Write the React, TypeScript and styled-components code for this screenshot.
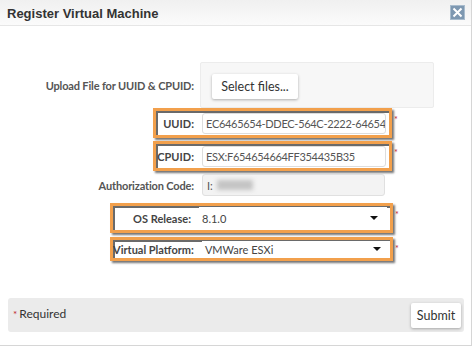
import React from "react";
import styled, { createGlobalStyle } from "styled-components";

const Global = createGlobalStyle`
  html, body { margin: 0; padding: 0; background: #ffffff; }
  body { font-family: Lato, "Open Sans", sans-serif; }
  * { box-sizing: border-box; }
`;

const Dialog = styled.div`
  width: 472px;
  height: 346px;
  background: #ffffff;
  border-right: 1px solid #d6d6d6;
  border-bottom: 1px solid #d6d6d6;
  display: flex;
  flex-direction: column;
`;

const Header = styled.div`
  height: 26px;
  flex: none;
  padding: 0 6px 0 7px;
  display: flex;
  align-items: center;
  justify-content: space-between;
  background: linear-gradient(#f0f0f0, #fbfbfb);
  border-bottom: 1px solid #e6e6e6;
`;

const Title = styled.div`
  font-family: "Liberation Sans", Arial, sans-serif;
  font-weight: bold;
  font-size: 13px;
  color: #333333;
  padding-top: 2px;
`;

const CloseButton = styled.div`
  width: 15px;
  height: 15px;
  background: #7e98b1;
  border: 1px solid #a9bccd;
  display: flex;
  align-items: center;
  justify-content: center;
`;

const Form = styled.div`
  display: flex;
  flex-direction: column;
  padding-top: 36px;
`;

const Row = styled.div<{ $gap: number; $left?: number }>`
  display: flex;
  align-items: center;
  margin-top: ${(p) => p.$gap}px;
  padding-left: ${(p) => p.$left ?? 0}px;
`;

const Label = styled.div`
  width: 194px;
  flex: none;
  text-align: right;
  font-weight: bold;
  font-size: 11px;
  letter-spacing: -0.15px;
  color: #555555;
`;

const UploadBox = styled.div`
  margin-left: 6px;
  width: 234px;
  height: 46px;
  background: #f7f7f7;
  border: 1px solid #ececec;
  border-radius: 2px;
  padding: 11px 0 0 11px;
`;

const Button = styled.div<{ $w: number; $h: number }>`
  width: ${(p) => p.$w}px;
  height: ${(p) => p.$h}px;
  background: #ffffff;
  border-radius: 2px;
  box-shadow: 0 1px 3px rgba(0, 0, 0, 0.3);
  display: flex;
  align-items: center;
  justify-content: center;
  font-size: 12.5px;
  color: #333333;
`;

const Highlight = styled.div<{ $w: number; $h: number }>`
  width: ${(p) => p.$w}px;
  height: ${(p) => p.$h}px;
  border: 3px solid #f2a04c;
  box-shadow: inset 2px 2px 0 #6a6a6a, 2px 2px 2px rgba(0, 0, 0, 0.55);
  background: #ffffff;
  display: flex;
  align-items: center;
  padding-right: 3px;
`;

const HLabel = styled.div`
  flex: 1;
  text-align: right;
  font-weight: bold;
  font-size: 11px;
  color: #444444;
  padding-right: 8px;
  white-space: nowrap;
`;

const TextField = styled.input<{ $w: number; $h: number }>`
  width: ${(p) => p.$w}px;
  height: ${(p) => p.$h}px;
  flex: none;
  border: 1px solid #dddddd;
  border-radius: 3px;
  background: #ffffff;
  font-family: Lato, sans-serif;
  font-size: 11px;
  letter-spacing: -0.3px;
  color: #555555;
  padding: 0 0 0 3px;
  outline: none;
`;

const AuthField = styled.div`
  margin-left: 8px;
  width: 183px;
  height: 22px;
  border: 1px solid #e0e0e0;
  border-radius: 3px;
  background: #f3f3f3;
  display: flex;
  align-items: center;
  padding-left: 4px;
  font-size: 11px;
  color: #555555;
`;

const Blur = styled.span`
  display: inline-block;
  width: 36px;
  height: 10px;
  margin-left: 4px;
  background: #c4c4c4;
  filter: blur(2px);
`;

const Select = styled.div<{ $w: number; $h: number }>`
  width: ${(p) => p.$w}px;
  height: ${(p) => p.$h}px;
  flex: none;
  display: flex;
  align-items: center;
  justify-content: space-between;
  padding: 0 9px 0 3px;
  font-size: 11px;
  color: #444444;
  background: #ffffff;
`;

const Required = styled.span`
  align-self: flex-start;
  color: #c0272d;
  font-size: 9px;
  margin-left: 2px;
  margin-top: 6px;
`;

const Footer = styled.div`
  margin: 37px 7px 0 8px;
  height: 34px;
  background: #ebebeb;
  border-radius: 3px;
  display: flex;
  align-items: center;
  justify-content: space-between;
  padding: 0 3px 0 5px;
`;

const ReqNote = styled.div`
  font-size: 12px;
  color: #333333;
  margin-top: -3px;
  span { color: #c0272d; font-size: 10px; margin-right: 2px; }
`;

const Arrow = () => (
  <svg width="8" height="4" viewBox="0 0 8 4">
    <path d="M0 0h8L4 4z" fill="#111" />
  </svg>
);

export default function App() {
  return (
    <>
      <Global />
      <Dialog>
        <Header>
          <Title>Register Virtual Machine</Title>
          <CloseButton>
            <svg width="11" height="11" viewBox="0 0 11 11">
              <path d="M1.5 1.5l8 8M9.5 1.5l-8 8" stroke="#fff" strokeWidth="2" />
            </svg>
          </CloseButton>
        </Header>
        <Form>
          <Row $gap={0}>
            <Label>Upload File for UUID &amp; CPUID:</Label>
            <UploadBox>
              <Button $w={86} $h={25}>Select files...</Button>
            </UploadBox>
          </Row>
          <Row $gap={0} $left={153}>
            <Highlight $w={239} $h={30}>
              <HLabel>UUID:</HLabel>
              <TextField $w={184} $h={21} readOnly value="EC6465654-DDEC-564C-2222-64654654654" />
            </Highlight>
            <Required>*</Required>
          </Row>
          <Row $gap={3} $left={153}>
            <Highlight $w={239} $h={30}>
              <HLabel>CPUID:</HLabel>
              <TextField $w={184} $h={21} readOnly value="ESX:F654654664FF354435B35" />
            </Highlight>
            <Required>*</Required>
          </Row>
          <Row $gap={3}>
            <Label>Authorization Code:</Label>
            <AuthField>
              I:<Blur />
            </AuthField>
          </Row>
          <Row $gap={7} $left={110}>
            <Highlight $w={283} $h={30}>
              <HLabel>OS Release:</HLabel>
              <Select $w={188} $h={22}>
                8.1.0
                <Arrow />
              </Select>
            </Highlight>
            <Required>*</Required>
          </Row>
          <Row $gap={4} $left={110}>
            <Highlight $w={283} $h={24}>
              <HLabel>Virtual Platform:</HLabel>
              <Select $w={188} $h={17}>
                VMWare ESXi
                <Arrow />
              </Select>
            </Highlight>
            <Required>*</Required>
          </Row>
        </Form>
        <Footer>
          <ReqNote>
            <span>*</span>Required
          </ReqNote>
          <Button $w={50} $h={25}>Submit</Button>
        </Footer>
      </Dialog>
    </>
  );
}
